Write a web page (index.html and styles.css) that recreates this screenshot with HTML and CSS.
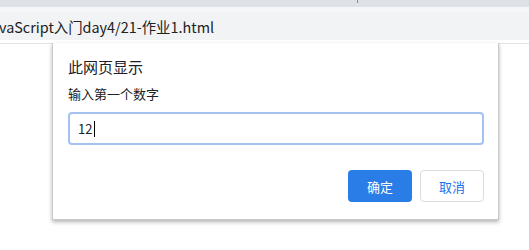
FILE: index.html
```html
<!DOCTYPE html>
<html>
<head>
<meta charset="utf-8">
<link rel="stylesheet" href="styles.css">
</head>
<body>
<div class="tabstrip"><span class="tabdiv"></span></div>
<div class="tabgap"></div>
<div class="toolbar"><span class="url">vaScript入门day4/21-作业1.html</span></div>
<div class="page">
  <div class="pageline"></div>
  <div class="dialog">
    <div class="title">此网页显示</div>
    <div class="label">输入第一个数字</div>
    <div class="input"><span class="val">12</span><span class="caret"></span></div>
    <div class="actions">
      <button class="btn primary">确定</button>
      <button class="btn secondary">取消</button>
    </div>
  </div>
</div>
</body>
</html>
```
FILE: styles.css
```css
html, body {
  margin: 0;
  padding: 0;
  background: #ffffff;
  font-family: "Noto Sans CJK SC", "Noto Sans", sans-serif;
  overflow: hidden;
}
.tabstrip {
  height: 7px;
  background: #dee1e6;
  position: relative;
}
.tabdiv {
  position: absolute;
  left: 357px;
  top: 0;
  width: 1px;
  height: 3px;
  background: #8a8d91;
}
.tabgap {
  height: 5px;
  background: #f6f7f8;
}
.toolbar {
  height: 28px;
  background: #f1f3f4;
  display: flex;
  align-items: center;
  white-space: nowrap;
  overflow: hidden;
}
.url {
  font-size: 14.4px;
  color: #202124;
  margin-left: -1px;
}
.page {
  position: relative;
  height: 210px;
}
.pageline {
  margin-top: 3px;
  height: 1px;
  background: #e2e2e2;
}
.dialog {
  position: absolute;
  left: 52px;
  top: 0;
  width: 447px;
  height: 177px;
  background: #fff;
  border: 1px solid #c9c9c9;
  border-top: none;
  box-shadow: 0 2px 4px rgba(0,0,0,0.3);
  box-sizing: border-box;
  padding: 14px 14px 0 15px;
  display: flex;
  flex-direction: column;
}
.title {
  font-size: 15px;
  line-height: 20px;
  color: #202124;
}
.label {
  margin-top: 8px;
  font-size: 13px;
  line-height: 17px;
  color: #202124;
}
.input {
  margin-top: 10px;
  height: 33px;
  border: 2px solid #a3c2f1;
  border-radius: 4px;
  box-sizing: border-box;
  display: flex;
  align-items: center;
  padding-left: 8px;
}
.val {
  font-size: 13px;
  color: #202124;
}
.caret {
  width: 1px;
  height: 16px;
  background: #000;
  margin-left: 2px;
}
.actions {
  margin-top: 25px;
  display: flex;
  justify-content: flex-end;
  gap: 8px;
}
.btn {
  width: 64px;
  height: 32px;
  border-radius: 4px;
  font-family: "Noto Sans CJK SC", sans-serif;
  font-size: 13px;
  padding: 0;
  box-sizing: border-box;
}
.primary {
  background: #2a7ce6;
  color: #fff;
  border: none;
}
.secondary {
  background: #fff;
  color: #1a73e8;
  border: 1px solid #dadce0;
}
```
